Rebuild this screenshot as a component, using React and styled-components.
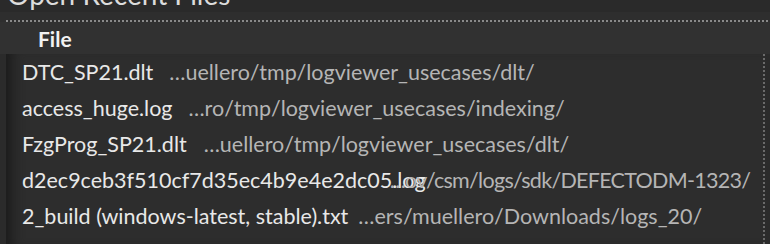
import React from 'react'
import styled, { createGlobalStyle } from 'styled-components'

const GlobalStyle = createGlobalStyle`
    html, body {
        margin: 0;
        padding: 0;
        background: #2b2b2b;
    }
    body {
        font-family: Lato, "Open Sans", sans-serif;
    }
`

const Pagina = styled.div`
    width: 770px;
    height: 244px;
    overflow: hidden;
    background: #2b2b2b;
    display: flex;
    flex-direction: column;
`

const TituloBarra = styled.div`
    height: 12px;
    overflow: hidden;
    background: #2a2a2a;
    display: flex;
    align-items: flex-end;
    padding-left: 7px;
`

const Titulo = styled.h1`
    margin: 0 0 4px 0;
    font-size: 28px;
    line-height: 28px;
    font-weight: 400;
    color: #dcdcdc;
    white-space: nowrap;
`

const Separador = styled.div`
    height: 10px;
    background: #2e2e2e;
    display: flex;
    align-items: flex-end;
    padding-left: 6px;
`

const LinhaPontilhada = styled.div`
    flex: 1;
    height: 2px;
    background-image: repeating-linear-gradient(to right, #8a8a8a 0 2px, transparent 2px 4px);
`

const Cabecalho = styled.div`
    height: 32px;
    background: #313131;
    display: flex;
    align-items: center;
    padding-left: 38px;
    font-size: 21px;
    font-weight: 700;
    color: #f2f2f2;
`

const Lista = styled.div`
    flex: 1;
    margin: 0 5px 0 6px;
    background: #2d2d2d;
    box-shadow: inset 14px 0 12px -8px #1c1c1c;
    border-right: 2px dotted #6a6a6a;
    overflow: hidden;
`

const Linha = styled.div`
    height: 36px;
    display: flex;
    align-items: center;
    padding-left: 16px;
    font-size: 21.5px;
    white-space: nowrap;
`

const NomeArquivo = styled.span`
    color: #e8e8e8;
`

const Caminho = styled.span`
    color: #b5b5b5;
    margin-left: ${p => p.$espaco}px;
    letter-spacing: ${p => p.$aperto ? '-0.7px' : 'normal'};
`

const arquivos = [
    { nome: 'DTC_SP21.dlt', caminho: '…uellero/tmp/logviewer_usecases/dlt/', espaco: 16 },
    { nome: 'access_huge.log', caminho: '…ro/tmp/logviewer_usecases/indexing/', espaco: 16 },
    { nome: 'FzgProg_SP21.dlt', caminho: '…uellero/tmp/logviewer_usecases/dlt/', espaco: 17 },
    { nome: 'd2ec9ceb3f510cf7d35ec4b9e4e2dc05.log', caminho: '…ov/csm/logs/sdk/DEFECTODM-1323/', espaco: -36, aperto: true },
    { nome: '2_build (windows-latest, stable).txt', caminho: '…ers/muellero/Downloads/logs_20/', espaco: 10 },
]

export default function App() {
    return (
        <Pagina>
            <GlobalStyle />
            <TituloBarra>
                <Titulo>Open Recent Files</Titulo>
            </TituloBarra>
            <Separador>
                <LinhaPontilhada />
            </Separador>
            <Cabecalho>File</Cabecalho>
            <Lista>
                {arquivos.map(a => (
                    <Linha key={a.nome}>
                        <NomeArquivo>{a.nome}</NomeArquivo>
                        <Caminho $espaco={a.espaco} $aperto={a.aperto}>{a.caminho}</Caminho>
                    </Linha>
                ))}
            </Lista>
        </Pagina>
    )
}
